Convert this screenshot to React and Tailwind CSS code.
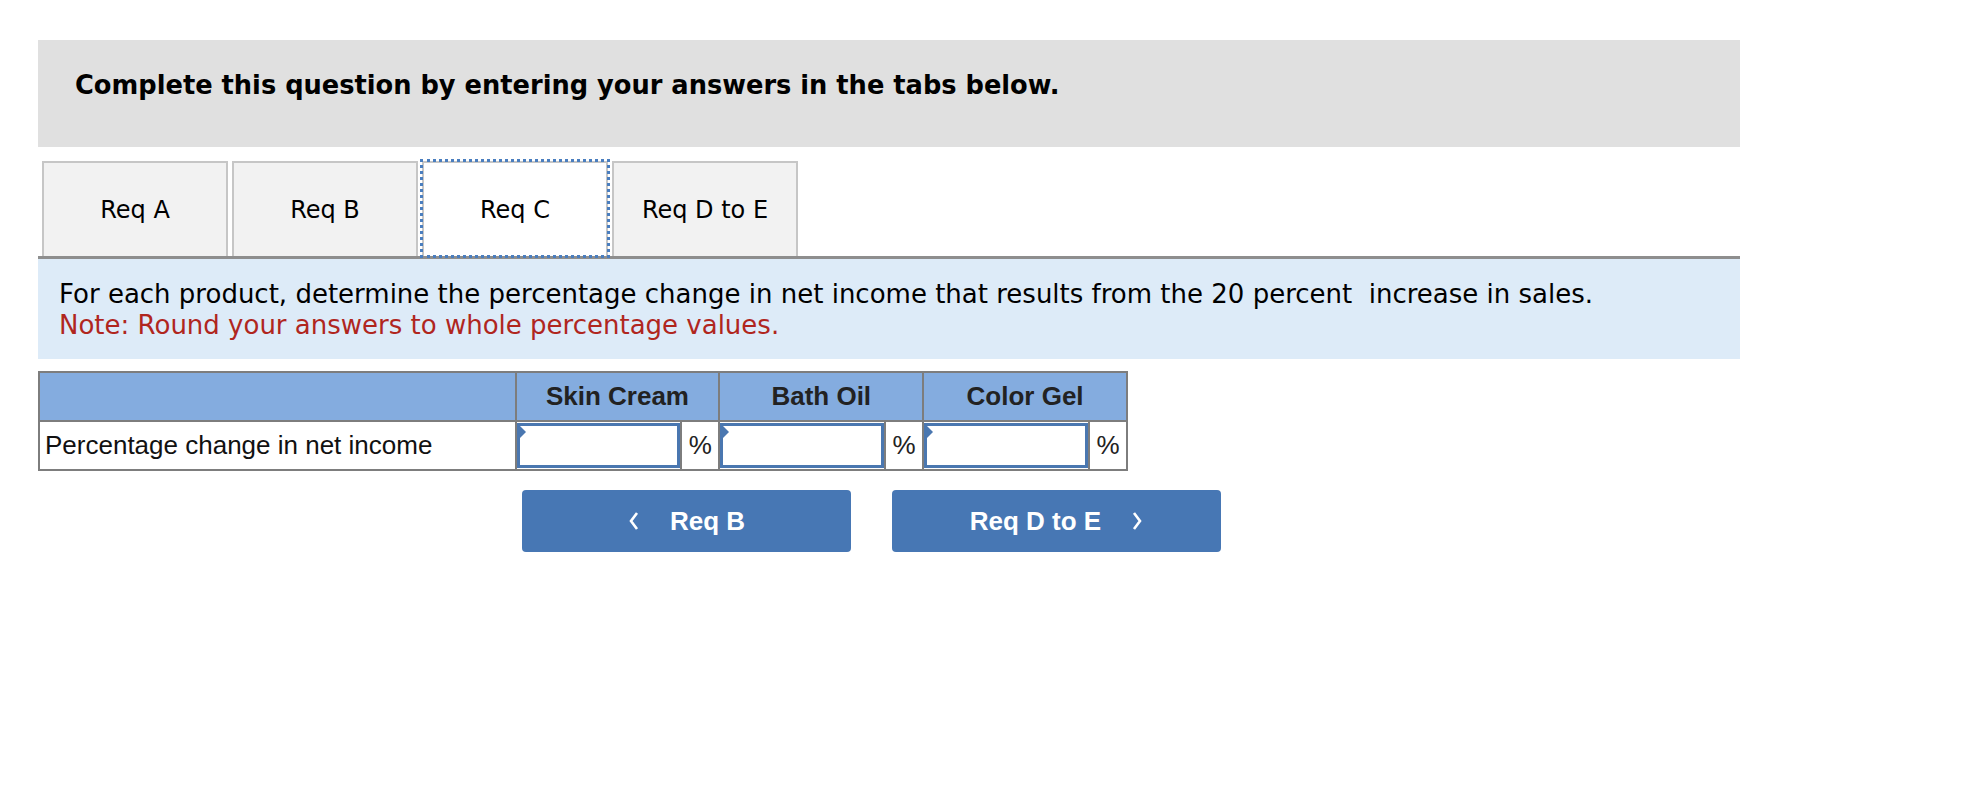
import React from 'react';

const verdana = { fontFamily: '"DejaVu Sans", Verdana, sans-serif' };
const arial = { fontFamily: '"Liberation Sans", Arial, sans-serif' };

const tabs = ['Req A', 'Req B', 'Req C', 'Req D to E'];
const products = ['Skin Cream', 'Bath Oil', 'Color Gel'];

const Chevron = ({ dir }) => (
  <svg width="12" height="20" viewBox="0 0 12 20" className="shrink-0">
    <polyline
      points={dir === 'left' ? '9,2 3,10 9,18' : '3,2 9,10 3,18'}
      fill="none"
      stroke="white"
      strokeWidth="2.6"
    />
  </svg>
);

const AnswerCell = () => (
  <>
    <td className="border-2 border-[#7d7d7d] p-0 w-[166px] h-[49px]">
      <div className="relative w-full h-[45px] border-[3px] border-[#4a77b0] bg-white">
        <div className="absolute -left-[1px] -top-[1px] w-0 h-0 border-y-[7px] border-y-transparent border-l-[7px] border-l-[#4a77b0]" />
      </div>
    </td>
    <td className="border-2 border-[#7d7d7d] p-0 w-[38px] text-center text-[26px] text-[#222]" style={arial}>
      %
    </td>
  </>
);

export default function App() {
  return (
    <div className="w-[1986px] h-[800px] bg-white">
      <div className="pt-[40px] pl-[38px] w-[1740px]">
        <div className="h-[107px] bg-[#e0e0e0] pl-[37px] pt-[30px]">
          <p className="text-[25.7px] leading-[31px] font-bold text-black" style={verdana}>
            Complete this question by entering your answers in the tabs below.
          </p>
        </div>

        <div className="mt-[14px] flex gap-[4px] pl-[4px]">
          {tabs.map((t, i) => (
            <div
              key={t}
              className={
                i === 2
                  ? 'w-[186px] h-[95px] flex items-center justify-center bg-white border-2 border-b-0 border-[#c6c6c6] outline-dotted outline-[3px] outline-[#4a7ebf] -outline-offset-[1px]'
                  : 'w-[186px] h-[95px] flex items-center justify-center bg-[#f2f2f2] border-2 border-b-0 border-[#c6c6c6]'
              }
            >
              <span className="text-[24px] text-black" style={verdana}>{t}</span>
            </div>
          ))}
        </div>

        <div className="border-t-[3px] border-[#8e8e8e] bg-[#ddebf8] h-[103px] pl-[21px] pt-[20px]" style={verdana}>
          <p className="text-[26px] leading-[31px] text-black">
            For each product, determine the percentage change in net income that results from the 20 percent&nbsp; increase in sales.
          </p>
          <p className="text-[26px] leading-[31px] text-[#b0261e]">
            Note: Round your answers to whole percentage values.
          </p>
        </div>

        <table className="mt-[12px] border-collapse border-2 border-[#7d7d7d] w-[1090px]" style={arial}>
          <thead>
            <tr className="bg-[#84acdf] h-[49px]">
              <th className="border-2 border-[#7d7d7d] w-[477px]" />
              {products.map((p) => (
                <th key={p} colSpan={2} className="border-2 border-[#7d7d7d] text-[26px] font-bold text-[#222] text-center">
                  {p}
                </th>
              ))}
            </tr>
          </thead>
          <tbody>
            <tr className="h-[49px] bg-white">
              <td className="border-2 border-[#7d7d7d] pl-[5px] text-[26px] text-[#111]">
                Percentage change in net income
              </td>
              <AnswerCell />
              <AnswerCell />
              <AnswerCell />
            </tr>
          </tbody>
        </table>

        <div className="mt-[19px] ml-[484px] flex gap-[41px]" style={arial}>
          <button className="w-[329px] h-[62px] rounded-[4px] bg-[#4777b4] flex items-center justify-center gap-[30px] text-white text-[26px] font-bold">
            <Chevron dir="left" />
            <span>Req B</span>
          </button>
          <button className="w-[329px] h-[62px] rounded-[4px] bg-[#4777b4] flex items-center justify-center gap-[30px] text-white text-[26px] font-bold">
            <span>Req D to E</span>
            <Chevron dir="right" />
          </button>
        </div>
      </div>
    </div>
  );
}
